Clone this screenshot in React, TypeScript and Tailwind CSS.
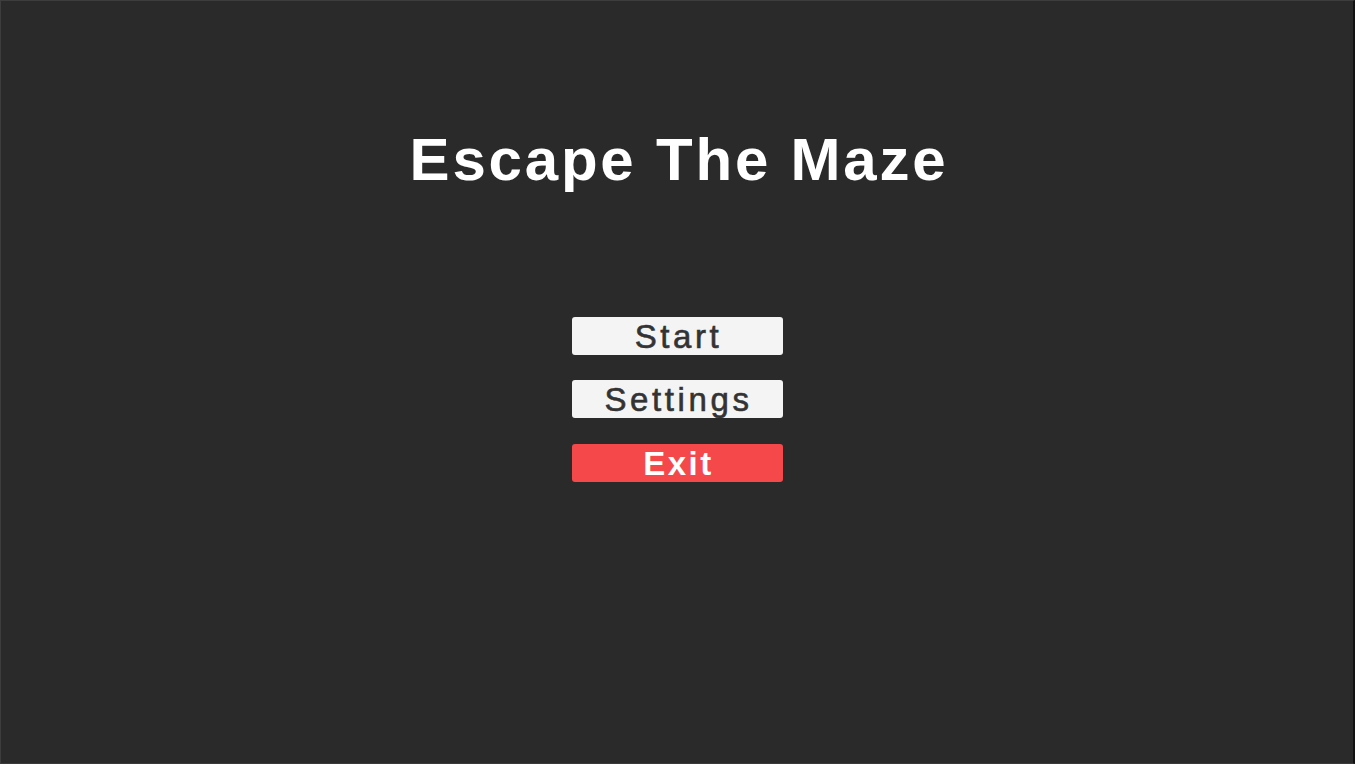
import React from "react";

type MenuButtonProps = {
  label: string;
  danger?: boolean;
  className?: string;
};

function MenuButton({ label, danger, className = "" }: MenuButtonProps) {
  const tone = danger
    ? "bg-[#f5484a] text-white font-bold tracking-[2.5px]"
    : "bg-[#f4f4f4] text-[#333333] tracking-[3.6px] [-webkit-text-stroke:0.6px_#333333]";
  return (
    <button
      type="button"
      className={`flex h-[38px] w-[211px] items-center justify-center rounded-[3px] pt-[2px] pl-[3px] text-[33px] leading-[36px] ${tone} ${className}`}
    >
      {label}
    </button>
  );
}

export default function App() {
  return (
    <div
      className="flex h-screen w-full flex-col items-center border-l border-t border-r-2 border-b border-l-[#3d3d3d] border-t-[#3d3d3d] border-r-[#111111] border-b-[#3a3a3a] bg-[#2a2a2a]"
      style={{ fontFamily: '"Liberation Sans", Arial, sans-serif' }}
    >
      <h1 className="mt-[129px] ml-[4px] text-[60px] font-bold leading-none tracking-[2.8px] text-white">
        Escape The Maze
      </h1>

      <div className="mt-[127px] flex flex-col gap-[25px]">
        <MenuButton label="Start" />
        <MenuButton label="Settings" />
        <MenuButton label="Exit" danger className="mt-px" />
      </div>
    </div>
  );
}
